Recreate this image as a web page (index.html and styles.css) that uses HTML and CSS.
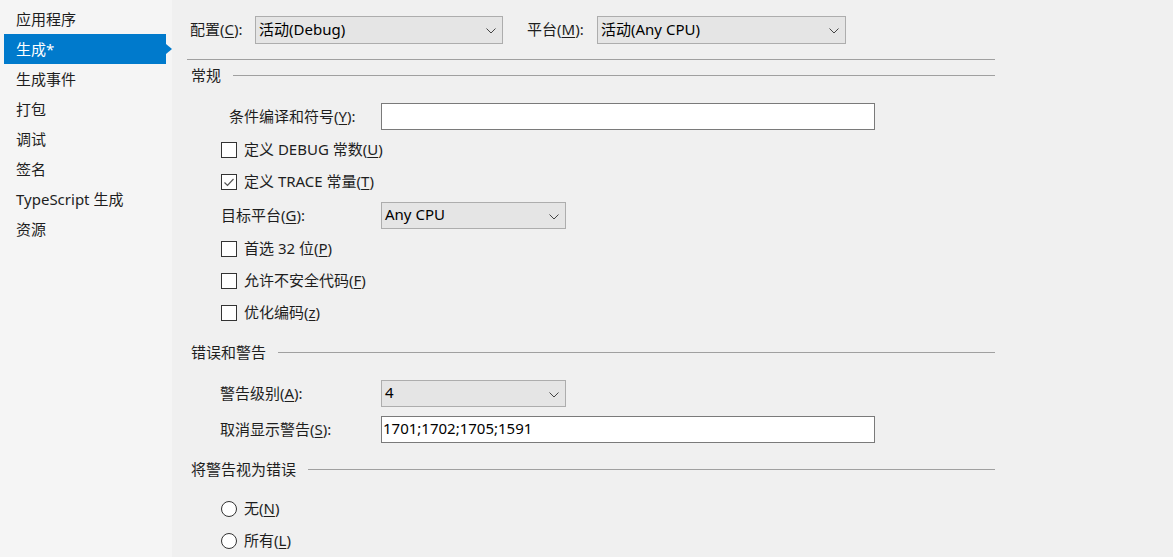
FILE: index.html
```html
<!DOCTYPE html>
<html lang="zh-CN">
<head>
<meta charset="utf-8">
<title>生成</title>
<link rel="stylesheet" href="styles.css">
</head>
<body>
<div class="app">
  <nav class="sidebar">
    <div class="nav-item">应用程序</div>
    <div class="nav-item active">生成*</div>
    <div class="nav-item">生成事件</div>
    <div class="nav-item">打包</div>
    <div class="nav-item">调试</div>
    <div class="nav-item">签名</div>
    <div class="nav-item">TypeScript 生成</div>
    <div class="nav-item">资源</div>
  </nav>
  <main class="main">
    <div class="config-row">
      <span class="cfg-label t">配置(<u>C</u>):</span>
      <div class="select sel-config"><span class="t">活动(Debug)</span><svg class="chev" width="10" height="6" viewBox="0 0 10 6"><path d="M0.5 0.5 L5 5 L9.5 0.5" fill="none" stroke="#444" stroke-width="1"/></svg></div>
      <span class="cfg-label plat t">平台(<u>M</u>):</span>
      <div class="select sel-platform"><span class="t">活动(Any CPU)</span><svg class="chev" width="10" height="6" viewBox="0 0 10 6"><path d="M0.5 0.5 L5 5 L9.5 0.5" fill="none" stroke="#444" stroke-width="1"/></svg></div>
    </div>
    <div class="top-sep"></div>

    <div class="section-head h-general"><span class="t">常规</span><div class="rule"></div></div>

    <div class="field-row r-symbols">
      <span class="field-label lbl-indent t">条件编译和符号(<u>Y</u>):</span>
      <div class="textbox wide"></div>
    </div>
    <div class="check-row r-debug"><span class="box"></span><span class="t">定义 DEBUG 常数(<u>U</u>)</span></div>
    <div class="check-row"><span class="box"><svg width="14" height="14" viewBox="0 0 14 14"><path d="M2.5 7.5 L5.5 10.5 L11.5 4" fill="none" stroke="#555" stroke-width="1.2"/></svg></span><span class="t">定义 TRACE 常量(<u>T</u>)</span></div>
    <div class="field-row r-target">
      <span class="field-label t">目标平台(<u>G</u>):</span>
      <div class="select narrow"><span class="t">Any CPU</span><svg class="chev" width="10" height="6" viewBox="0 0 10 6"><path d="M0.5 0.5 L5 5 L9.5 0.5" fill="none" stroke="#444" stroke-width="1"/></svg></div>
    </div>
    <div class="check-row r-pref"><span class="box"></span><span class="t">首选 32 位(<u>P</u>)</span></div>
    <div class="check-row"><span class="box"></span><span class="t">允许不安全代码(<u>F</u>)</span></div>
    <div class="check-row"><span class="box"></span><span class="t">优化编码(<u>z</u>)</span></div>

    <div class="section-head h-errors"><span class="t">错误和警告</span><div class="rule"></div></div>

    <div class="field-row r-level">
      <span class="field-label t">警告级别(<u>A</u>):</span>
      <div class="select narrow"><span class="t">4</span><svg class="chev" width="10" height="6" viewBox="0 0 10 6"><path d="M0.5 0.5 L5 5 L9.5 0.5" fill="none" stroke="#444" stroke-width="1"/></svg></div>
    </div>
    <div class="field-row r-suppress">
      <span class="field-label t">取消显示警告(<u>S</u>):</span>
      <div class="textbox wide"><span class="t">1701;1702;1705;1591</span></div>
    </div>

    <div class="section-head h-treat"><span class="t">将警告视为错误</span><div class="rule"></div></div>

    <div class="check-row r-none"><span class="radio"></span><span class="t">无(<u>N</u>)</span></div>
    <div class="check-row"><span class="radio"></span><span class="t">所有(<u>L</u>)</span></div>
  </main>
</div>
</body>
</html>
```
FILE: styles.css
```css
* { box-sizing: border-box; }
html, body { margin: 0; padding: 0; }
body {
  font-family: "Noto Sans", "Noto Sans CJK SC", sans-serif;
  font-size: 15px;
  color: #1e1e1e;
  background: #f0f0f0;
  width: 1173px;
  height: 557px;
  overflow: hidden;
}
u { text-decoration: underline; text-underline-offset: 2px; text-decoration-thickness: 1px; }
.t { margin-bottom: 3px; }

.app { display: flex; height: 557px; }

.sidebar {
  width: 172px;
  flex: none;
  background: #f5f5f5;
  padding-top: 4px;
}
.nav-item {
  position: relative;
  width: 162px;
  margin-left: 4px;
  height: 30px;
  line-height: 30px;
  padding-left: 12px;
  white-space: nowrap;
}
.nav-item.active {
  background: #007acc;
  color: #ffffff;
}
.nav-item.active::after {
  content: "";
  position: absolute;
  right: -6px;
  top: 10px;
  border-top: 5px solid transparent;
  border-bottom: 5px solid transparent;
  border-left: 6px solid #007acc;
}

.main {
  flex: 1;
  padding-left: 18px;
  padding-top: 16px;
}

.config-row {
  display: flex;
  align-items: center;
  height: 28px;
}
.cfg-label { width: 65px; flex: none; white-space: nowrap; }
.cfg-label.plat { width: 70px; margin-left: 24px; }

.select {
  position: relative;
  display: flex;
  align-items: center;
  height: 28px;
  padding-left: 3px;
  background: #e5e5e5;
  border: 1px solid #adadad;
  color: #000;
  white-space: nowrap;
}
.select .chev { position: absolute; right: 6px; top: 11px; }
.sel-config { width: 248px; }
.sel-platform { width: 249px; }
.select.narrow { width: 185px; height: 27px; }
.select.narrow .chev { top: 11px; }

.top-sep {
  margin-top: 15px;
  margin-left: -3px;
  width: 808px;
  height: 1px;
  background: #a0a0a0;
}

.section-head {
  display: flex;
  align-items: center;
  height: 20px;
  margin-left: 1px;
  width: 804px;
  white-space: nowrap;
}
.section-head .rule {
  flex: 1;
  height: 1px;
  background: #a0a0a0;
  margin-left: 12px;
  margin-top: -1px;
}
.h-general { margin-top: 6px; }
.h-errors { margin-top: 14px; }
.h-treat { margin-top: 17px; }

.field-row {
  display: flex;
  align-items: center;
  height: 27px;
  padding-left: 30px;
}
.field-label { width: 161px; flex: none; white-space: nowrap; }
.field-label.lbl-indent { padding-left: 9px; }
.r-symbols { margin-top: 17px; }
.r-target { margin-top: 4px; padding-left: 31px; }
.r-target .field-label { width: 160px; }
.r-level { margin-top: 17px; }
.r-suppress { margin-top: 9px; }

.textbox {
  height: 27px;
  background: #ffffff;
  border: 1px solid #7a7a7a;
  display: flex;
  align-items: center;
  padding-left: 1px;
  color: #000;
}
.textbox.wide { width: 494px; }

.check-row {
  display: flex;
  align-items: center;
  height: 32px;
  padding-left: 31px;
  white-space: nowrap;
}
.r-debug { margin-top: 4px; }
.r-pref { margin-top: 4px; }
.r-none { margin-top: 13px; }

.box {
  width: 16px;
  height: 16px;
  flex: none;
  border: 1px solid #333333;
  background: #ffffff;
  margin-right: 7px;
  display: flex;
  align-items: center;
  justify-content: center;
}
.radio {
  width: 16px;
  height: 16px;
  flex: none;
  border: 1px solid #333333;
  border-radius: 50%;
  background: #ffffff;
  margin-right: 7px;
}
```
